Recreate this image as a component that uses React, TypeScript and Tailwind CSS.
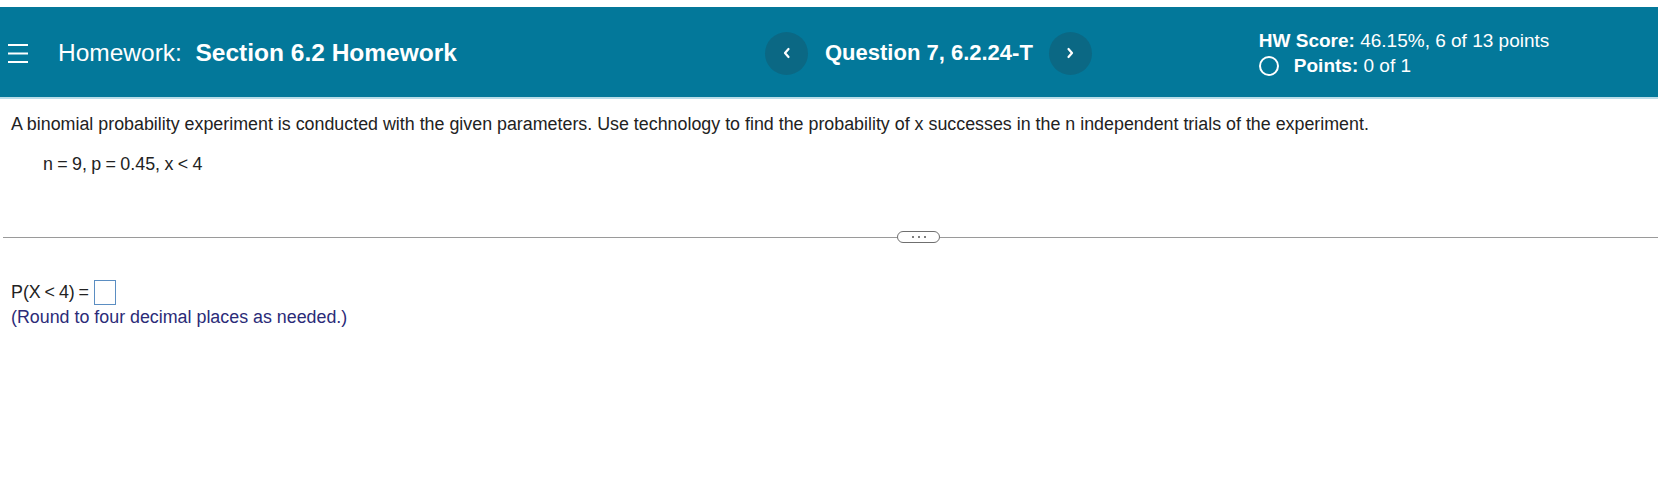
import React from "react";

const font = { fontFamily: '"Liberation Sans", Arial, sans-serif' };

function Chevron({ dir }: { dir: "left" | "right" }) {
  return (
    <svg width="10" height="12" viewBox="0 0 10 12" fill="none">
      {dir === "left" ? (
        <path d="M6.5 2 L3 6 L6.5 10" stroke="white" strokeWidth="2.2" strokeLinecap="round" strokeLinejoin="round" />
      ) : (
        <path d="M3.5 2 L7 6 L3.5 10" stroke="white" strokeWidth="2.2" strokeLinecap="round" strokeLinejoin="round" />
      )}
    </svg>
  );
}

export default function App() {
  return (
    <div className="w-[1658px] h-[493px] bg-white overflow-hidden" style={font}>
      <div className="pt-[7px]">
        <header className="h-[92px] pt-[2px] bg-[#03789a] flex items-center text-white border-b-2 border-[#b9dde9]">
          <div className="w-[765px] flex items-center shrink-0">
            <svg className="ml-[8px]" width="20" height="20" viewBox="0 0 20 20">
              <rect x="0" y="1" width="20" height="2" fill="white" />
              <rect x="0" y="9.5" width="20" height="2" fill="white" />
              <rect x="0" y="18" width="20" height="2" fill="white" />
            </svg>
            <div className="ml-[30px] mt-[1px] text-[24.5px] leading-none whitespace-nowrap">
              Homework:&nbsp; <span className="font-bold">Section 6.2 Homework</span>
            </div>
          </div>
          <div className="flex items-center shrink-0">
            <button className="w-[43px] h-[43px] rounded-full bg-[#0b6884] flex items-center justify-center">
              <Chevron dir="left" />
            </button>
            <div className="ml-[17px] mr-[16px] text-[22px] font-bold leading-none whitespace-nowrap">
              Question 7, 6.2.24-T
            </div>
            <button className="w-[43px] h-[43px] rounded-full bg-[#0b6884] flex items-center justify-center">
              <Chevron dir="right" />
            </button>
          </div>
          <div className="ml-[167px] flex flex-col text-[19px] leading-[25px] whitespace-nowrap">
            <div>
              <span className="font-bold">HW Score:</span> 46.15%, 6 of 13 points
            </div>
            <div className="flex items-center">
              <span className="w-[20px] h-[20px] rounded-full border-[2.5px] border-white inline-block" />
              <span className="ml-[15px] font-bold">Points:</span>&nbsp;0 of 1
            </div>
          </div>
        </header>
      </div>

      <div className="pt-[15px] text-[#222] text-[17.85px] leading-[21px]">
        <p className="pl-[11px] whitespace-nowrap">
          A binomial probability experiment is conducted with the given parameters. Use technology to find the probability of x successes in the n independent trials of the experiment.
        </p>
        <p className="pl-[43px] mt-[19px] whitespace-nowrap [word-spacing:-0.6px]">n = 9, p = 0.45, x &lt; 4</p>
      </div>

      <div className="mt-[56px] flex items-center pl-[3px]">
        <div className="h-px bg-[#9a9a9a] w-[894px]" />
        <div className="w-[43px] h-[12px] rounded-full border border-[#6f6f6f] flex items-center justify-center gap-[4px] shrink-0">
          <span className="w-[2px] h-[2px] rounded-full bg-[#555]" />
          <span className="w-[2px] h-[2px] rounded-full bg-[#555]" />
          <span className="w-[2px] h-[2px] rounded-full bg-[#555]" />
        </div>
        <div className="h-px bg-[#9a9a9a] flex-1" />
      </div>

      <div className="pl-[11px] mt-[37px] text-[17.85px] leading-[25px]">
        <div className="flex items-center text-[#222]">
          <span className="[word-spacing:-1.1px]">P(X &lt; 4) =</span>
          <span className="ml-[5px] w-[22px] h-[25px] border border-[#5b8ec2] inline-block" />
        </div>
        <div className="text-[#2b2b78]">(Round to four decimal places as needed.)</div>
      </div>
    </div>
  );
}
